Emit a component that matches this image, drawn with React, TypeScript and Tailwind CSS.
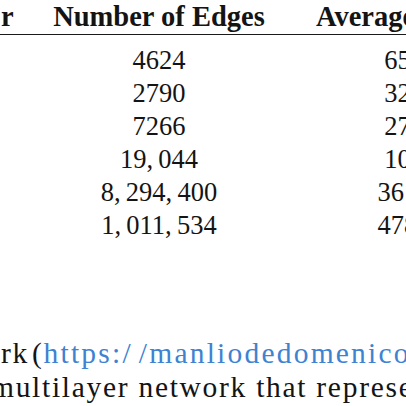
const ROWS = [
  { edges: "4624", avg: "65.41" },
  { edges: "2790", avg: "32.18" },
  { edges: "7266", avg: "27.95" },
  { edges: "19,\u2009044", avg: "10.27" },
  { edges: "8,\u2009294,\u2009400", avg: "361.22" },
  { edges: "1,\u2009011,\u2009534", avg: "478.63" },
];

export default function App() {
  return (
    <div
      className="w-[406px] h-[406px] overflow-hidden bg-white text-[#141414]"
      style={{ fontFamily: '"Liberation Serif", "Times New Roman", serif' }}
    >
      {/* header */}
      <div className="flex h-[34px] items-center whitespace-nowrap text-[28.5px] font-bold leading-none">
        <div className="w-[40px] shrink-0 pl-[1px]">r</div>
        <div className="w-[238px] shrink-0 text-center">Number of Edges</div>
        <div className="w-[272px] shrink-0 pl-[38px]">Average Degree</div>
      </div>
      <div className="border-t-[1.5px] border-[#1a1a1a]" />

      {/* body rows */}
      <div className="pt-[9px] text-[26.5px]">
        {ROWS.map((row) => (
          <div key={row.edges} className="flex h-[33px] items-center whitespace-nowrap leading-none">
            <div className="w-[40px] shrink-0" />
            <div className="w-[238px] shrink-0 text-center">{row.edges}</div>
            <div className="w-[272px] shrink-0 text-center">{row.avg}</div>
          </div>
        ))}
      </div>

      {/* caption text */}
      <div className="mt-[94px] whitespace-nowrap text-[29.5px] leading-[34px] tracking-[0.058em]">
        <div className="pl-[1px]">
          rk<span className="ml-[3px]">(</span>
          <span className="text-[#3e82d2] tracking-[0.075em]">
            https:/<span className="ml-[6px]">/</span>manliodedomenico.com
          </span>
        </div>
        <div className="ml-[-9px]">multilayer network that represents</div>
      </div>
    </div>
  );
}
